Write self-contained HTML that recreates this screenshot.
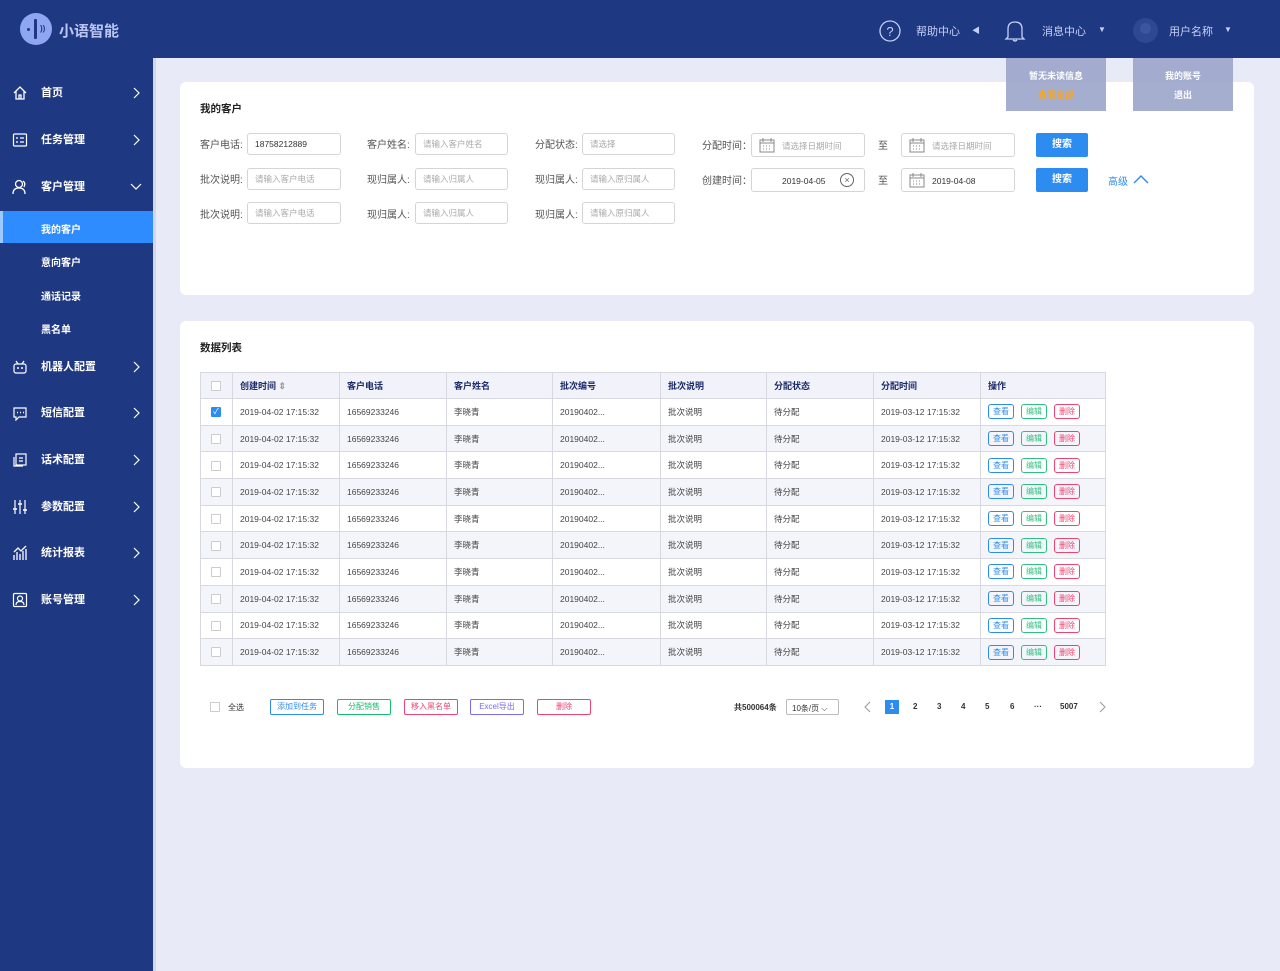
<!DOCTYPE html>
<html><head><meta charset="utf-8"><style>
*{margin:0;padding:0;box-sizing:border-box}
body{width:1280px;height:971px;background:#e8eaf7;font-family:"Liberation Sans","Noto Sans CJK SC",sans-serif;position:relative;overflow:hidden;color:#333}
.abs{position:absolute}
#hd{left:0;top:0;width:1280px;height:58px;background:#1f3882}
#sb{left:0;top:58px;width:153px;height:913px;background:#1f3882}
.nav{position:absolute;left:0;width:153px;height:20px;color:#fff;font-size:11px;font-weight:bold}
.nav .t{position:absolute;left:41px;top:0px}
.nav .ic{position:absolute;left:12px;top:1px}
.nav .ar{position:absolute;left:133px;top:3px}
.sub{position:absolute;left:41px;color:#fff;font-size:10px;font-weight:bold}
.card{position:absolute;background:#fff;border-radius:6px}
.lbl{position:absolute;font-size:10px;color:#555;margin-top:-2px}
.inp{position:absolute;height:22px;border:1px solid #d5d5d5;border-radius:3px;font-size:8.5px;color:#aaa;padding:6px 7px;background:#fff;line-height:9px}
.btn{position:absolute;width:52px;height:24px;background:#2d8cf0;border-radius:2px;color:#fff;font-size:10px;font-weight:bold;text-align:center;line-height:24px}
table{position:absolute;left:200px;top:372px;border-collapse:collapse;font-size:8.5px;color:#444}
td,th{border:1px solid #d8d8e0;height:26.7px;padding-left:7px;text-align:left;white-space:nowrap}
th{background:#f1f2fa;color:#1b2a6b;font-weight:bold;font-size:9px;height:26px}
tr:nth-child(odd) td{background:#f4f5fb}
.cb{display:inline-block;width:10px;height:10px;border:1px solid #ccc;border-radius:1px;background:#fff;vertical-align:middle}
.op{display:inline-block;width:26px;height:15px;border:1px solid;border-radius:3px;text-align:center;line-height:13px;font-size:8px;margin-right:7px}
.b{color:#2d8cf0}.g{color:#2fbf7f}.r{color:#f0436f}
.fb{position:absolute;top:699px;height:16px;border:1px solid;border-radius:2px;font-size:8px;text-align:center;line-height:14px}
.pg{position:absolute;top:702px;font-size:8px;color:#333;font-weight:bold}
.dd{position:absolute;background:rgba(150,160,200,0.85);color:#fff;font-size:9px;font-weight:bold;text-align:center}
</style></head><body>
<div id="hd" class="abs">
<div class="abs" style="left:20px;top:13px;width:32px;height:32px;border-radius:50%;background:#8fa6f2"></div>
<div class="abs" style="left:34px;top:19px;width:3px;height:20px;background:#1f3882;border-radius:1px"></div>
<div class="abs" style="left:27px;top:28px;width:3px;height:3px;background:#1f3882;border-radius:50%"></div>
<div class="abs" style="left:40px;top:24px;font-size:8px;color:#1f3882;font-weight:bold">))</div>
<div class="abs" style="left:59px;top:20px;color:#b9c6f3;font-size:15px;font-weight:bold">小语智能</div>
<svg class="abs" style="left:879px;top:20px" width="22" height="22"><circle cx="11" cy="11" r="10" fill="none" stroke="#c5d0f5" stroke-width="1.3"/><text x="11" y="16" font-size="13" fill="#c5d0f5" text-anchor="middle" font-family="Liberation Sans">?</text></svg>
<div class="abs" style="left:916px;top:23px;color:#c5d0f5;font-size:11px">帮助中心</div>
<div class="abs" style="left:972px;top:25px;color:#c5d0f5;font-size:8px">◀</div>
<svg class="abs" style="left:1004px;top:19px" width="22" height="24"><path d="M4 18 L4 10 Q4 3 11 3 Q18 3 18 10 L18 18 L20 20 L2 20 Z M9 21 Q11 23 13 21" fill="none" stroke="#c5d0f5" stroke-width="1.3"/></svg>
<div class="abs" style="left:1042px;top:23px;color:#c5d0f5;font-size:11px">消息中心</div>
<div class="abs" style="left:1098px;top:25px;color:#c5d0f5;font-size:8px">▼</div>
<div class="abs" style="left:1133px;top:18px;width:25px;height:25px;border-radius:50%;background:#2e4892"></div>
<div class="abs" style="left:1140px;top:23px;width:11px;height:11px;border-radius:50%;background:#3d559c"></div>
<div class="abs" style="left:1169px;top:23px;color:#c5d0f5;font-size:11px">用户名称</div>
<div class="abs" style="left:1224px;top:25px;color:#c5d0f5;font-size:8px">▼</div>
</div>
<div id="sb" class="abs"></div>
<div class="abs" style="left:153px;top:58px;width:3px;height:913px;background:#d4d7ea"></div>
<div class="nav" style="top:84px"><svg class="ic" width="16" height="16"><path d="M2 8 L8 2 L14 8 M4 6 V14 H12 V6 M7 14 V10 H9 V14" fill="none" stroke="#fff" stroke-width="1.3"/></svg><span class="t">首页</span><svg class="ar" width="8" height="12"><path d="M1 1L6 6L1 11" fill="none" stroke="#fff" stroke-width="1.2"/></svg></div>
<div class="nav" style="top:131px"><svg class="ic" width="16" height="16"><rect x="1.5" y="2" width="13" height="12" rx="1" fill="none" stroke="#fff" stroke-width="1.2"/><path d="M4 6h2M8 6h4M4 10h2M8 10h4" stroke="#fff" stroke-width="1.2"/></svg><span class="t">任务管理</span><svg class="ar" width="8" height="12"><path d="M1 1L6 6L1 11" fill="none" stroke="#fff" stroke-width="1.2"/></svg></div>
<div class="nav" style="top:178px"><svg class="ic" width="16" height="16"><circle cx="7" cy="5" r="3.5" fill="none" stroke="#fff" stroke-width="1.3"/><path d="M1 15 Q1 9 7 9 Q13 9 13 15 M11 2 Q14 4 12 8" fill="none" stroke="#fff" stroke-width="1.3"/></svg><span class="t">客户管理</span><svg class="ar" style="left:130px;top:5px" width="12" height="8"><path d="M1 1L6 6L11 1" fill="none" stroke="#fff" stroke-width="1.2"/></svg></div>
<div class="abs" style="left:0;top:211px;width:153px;height:32px;background:#2f8cff"></div>
<div class="abs" style="left:0;top:211px;width:3px;height:32px;background:#9cc9ff"></div>
<div class="sub" style="top:221px">我的客户</div>
<div class="sub" style="top:254px">意向客户</div>
<div class="sub" style="top:288px">通话记录</div>
<div class="sub" style="top:321px">黑名单</div>
<div class="nav" style="top:358px"><svg class="ic" width="16" height="16"><rect x="2" y="5" width="12" height="9" rx="2" fill="none" stroke="#fff" stroke-width="1.2"/><path d="M4 2 L6 5 M12 2 L10 5" stroke="#fff" stroke-width="1.2"/><circle cx="6" cy="9" r="1" fill="#fff"/><circle cx="10" cy="9" r="1" fill="#fff"/></svg><span class="t">机器人配置</span><svg class="ar" width="8" height="12"><path d="M1 1L6 6L1 11" fill="none" stroke="#fff" stroke-width="1.2"/></svg></div>
<div class="nav" style="top:404px"><svg class="ic" width="16" height="16"><path d="M2 3h12v9H7l-3 3v-3H2z" fill="none" stroke="#fff" stroke-width="1.2"/><path d="M5 7.5h1M8 7.5h1M11 7.5h1" stroke="#fff" stroke-width="1.4"/></svg><span class="t">短信配置</span><svg class="ar" width="8" height="12"><path d="M1 1L6 6L1 11" fill="none" stroke="#fff" stroke-width="1.2"/></svg></div>
<div class="nav" style="top:451px"><svg class="ic" width="16" height="16"><rect x="4" y="2" width="10" height="11" fill="none" stroke="#fff" stroke-width="1.2"/><path d="M2 5v9h9M7 6h4M7 9h4" fill="none" stroke="#fff" stroke-width="1.2"/></svg><span class="t">话术配置</span><svg class="ar" width="8" height="12"><path d="M1 1L6 6L1 11" fill="none" stroke="#fff" stroke-width="1.2"/></svg></div>
<div class="nav" style="top:498px"><svg class="ic" width="16" height="16"><path d="M3 1v14M8 1v14M13 1v14" stroke="#fff" stroke-width="1.2"/><path d="M1 10h4M6 5h4M11 11h4" stroke="#fff" stroke-width="1.6"/></svg><span class="t">参数配置</span><svg class="ar" width="8" height="12"><path d="M1 1L6 6L1 11" fill="none" stroke="#fff" stroke-width="1.2"/></svg></div>
<div class="nav" style="top:544px"><svg class="ic" width="16" height="16"><path d="M2 15V10M5 15V7M8 15V9M11 15V6M14 15V4M2 7L6 3L9 6L14 1" fill="none" stroke="#fff" stroke-width="1.3"/></svg><span class="t">统计报表</span><svg class="ar" width="8" height="12"><path d="M1 1L6 6L1 11" fill="none" stroke="#fff" stroke-width="1.2"/></svg></div>
<div class="nav" style="top:591px"><svg class="ic" width="16" height="16"><rect x="1.5" y="1.5" width="13" height="13" rx="1" fill="none" stroke="#fff" stroke-width="1.2"/><circle cx="8" cy="6.5" r="2.5" fill="none" stroke="#fff" stroke-width="1.2"/><path d="M4 13Q4 9.5 8 9.5Q12 9.5 12 13" fill="none" stroke="#fff" stroke-width="1.2"/></svg><span class="t">账号管理</span><svg class="ar" width="8" height="12"><path d="M1 1L6 6L1 11" fill="none" stroke="#fff" stroke-width="1.2"/></svg></div>

<div class="card" style="left:180px;top:82px;width:1074px;height:213px"></div>
<div class="abs" style="left:200px;top:101px;font-size:10.5px;font-weight:bold;color:#222">我的客户</div>
<div class="lbl" style="left:200px;top:138px">客户电话:</div><div class="inp" style="left:247px;top:133px;width:94px;color:#333">18758212889</div>
<div class="lbl" style="left:367px;top:138px">客户姓名:</div><div class="inp" style="left:415px;top:133px;width:93px">请输入客户姓名</div>
<div class="lbl" style="left:535px;top:138px">分配状态:</div><div class="inp" style="left:582px;top:133px;width:93px">请选择</div>
<div class="lbl" style="left:702px;top:139px">分配时间：</div><div class="inp" style="left:751px;top:133px;width:114px;height:24px;padding-left:30px;padding-top:8px">请选择日期时间</div>
<div class="lbl" style="left:878px;top:139px">至</div><div class="inp" style="left:901px;top:133px;width:114px;height:24px;padding-left:30px;padding-top:8px">请选择日期时间</div>
<div class="btn" style="left:1036px;top:133px">搜索</div>
<div class="lbl" style="left:200px;top:173px">批次说明:</div><div class="inp" style="left:247px;top:168px;width:94px">请输入客户电话</div>
<div class="lbl" style="left:367px;top:173px">现归属人:</div><div class="inp" style="left:415px;top:168px;width:93px">请输入归属人</div>
<div class="lbl" style="left:535px;top:173px">现归属人:</div><div class="inp" style="left:582px;top:168px;width:93px">请输入原归属人</div>
<div class="lbl" style="left:702px;top:174px">创建时间：</div><div class="inp" style="left:751px;top:168px;width:114px;height:24px;padding-left:30px;padding-top:8px;color:#333">2019-04-05</div>
<div class="abs" style="left:840px;top:173px;width:14px;height:14px;border:1px solid #666;border-radius:50%;font-size:9px;text-align:center;line-height:12px;color:#666">×</div>
<div class="lbl" style="left:878px;top:174px">至</div><div class="inp" style="left:901px;top:168px;width:114px;height:24px;padding-left:30px;padding-top:8px;color:#333">2019-04-08</div>
<div class="btn" style="left:1036px;top:168px">搜索</div>
<div class="abs" style="left:1108px;top:173px;color:#2d8cf0;font-size:10px">高级</div>
<svg class="abs" style="left:1133px;top:174px" width="16" height="10"><path d="M1 9L8 2L15 9" fill="none" stroke="#2d8cf0" stroke-width="1.4"/></svg>
<div class="lbl" style="left:200px;top:208px">批次说明:</div><div class="inp" style="left:247px;top:202px;width:94px">请输入客户电话</div>
<div class="lbl" style="left:367px;top:208px">现归属人:</div><div class="inp" style="left:415px;top:202px;width:93px">请输入归属人</div>
<div class="lbl" style="left:535px;top:208px">现归属人:</div><div class="inp" style="left:582px;top:202px;width:93px">请输入原归属人</div>
<svg class="abs" style="left:759px;top:137px" width="16" height="16"><rect x="1" y="3" width="14" height="12" fill="none" stroke="#888"/><path d="M1 6h14M4 1v4M12 1v4M4 9h1M7 9h1M10 9h1M4 12h1M7 12h1M10 12h1" stroke="#888"/></svg>
<svg class="abs" style="left:909px;top:137px" width="16" height="16"><rect x="1" y="3" width="14" height="12" fill="none" stroke="#888"/><path d="M1 6h14M4 1v4M12 1v4M4 9h1M7 9h1M10 9h1M4 12h1M7 12h1M10 12h1" stroke="#888"/></svg>
<svg class="abs" style="left:909px;top:172px" width="16" height="16"><rect x="1" y="3" width="14" height="12" fill="none" stroke="#888"/><path d="M1 6h14M4 1v4M12 1v4M4 9h1M7 9h1M10 9h1M4 12h1M7 12h1M10 12h1" stroke="#888"/></svg>

<div class="dd" style="left:1006px;top:58px;width:100px;height:53px"><div style="margin-top:11px">暂无未读信息</div><div style="margin-top:6px;color:#f5a623;text-decoration:underline">查看全部</div></div>
<div class="dd" style="left:1133px;top:58px;width:100px;height:53px"><div style="margin-top:11px">我的账号</div><div style="margin-top:6px">退出</div></div>

<div class="card" style="left:180px;top:321px;width:1074px;height:447px"></div>
<div class="abs" style="left:200px;top:340px;font-size:10.5px;font-weight:bold;color:#222">数据列表</div>
<table>
<tr><th style="width:32px;padding-left:10px"><span class="cb"></span></th><th style="width:107px">创建时间 <span style="color:#999">⇕</span></th><th style="width:107px">客户电话</th><th style="width:106px">客户姓名</th><th style="width:108px">批次编号</th><th style="width:106px">批次说明</th><th style="width:107px">分配状态</th><th style="width:107px">分配时间</th><th style="width:125px">操作</th></tr>
<tr><td style="padding-left:10px"><span class="cb" style="background:#2d8cf0;border-color:#2d8cf0;color:#fff;font-size:8px;line-height:8px;text-align:center">✓</span></td><td>2019-04-02 17:15:32</td><td>16569233246</td><td>李晓青</td><td>20190402...</td><td>批次说明</td><td>待分配</td><td>2019-03-12 17:15:32</td><td><span class="op b">查看</span><span class="op g">编辑</span><span class="op r">删除</span></td></tr>
<tr><td style="padding-left:10px"><span class="cb"></span></td><td>2019-04-02 17:15:32</td><td>16569233246</td><td>李晓青</td><td>20190402...</td><td>批次说明</td><td>待分配</td><td>2019-03-12 17:15:32</td><td><span class="op b">查看</span><span class="op g">编辑</span><span class="op r">删除</span></td></tr>
<tr><td style="padding-left:10px"><span class="cb"></span></td><td>2019-04-02 17:15:32</td><td>16569233246</td><td>李晓青</td><td>20190402...</td><td>批次说明</td><td>待分配</td><td>2019-03-12 17:15:32</td><td><span class="op b">查看</span><span class="op g">编辑</span><span class="op r">删除</span></td></tr>
<tr><td style="padding-left:10px"><span class="cb"></span></td><td>2019-04-02 17:15:32</td><td>16569233246</td><td>李晓青</td><td>20190402...</td><td>批次说明</td><td>待分配</td><td>2019-03-12 17:15:32</td><td><span class="op b">查看</span><span class="op g">编辑</span><span class="op r">删除</span></td></tr>
<tr><td style="padding-left:10px"><span class="cb"></span></td><td>2019-04-02 17:15:32</td><td>16569233246</td><td>李晓青</td><td>20190402...</td><td>批次说明</td><td>待分配</td><td>2019-03-12 17:15:32</td><td><span class="op b">查看</span><span class="op g">编辑</span><span class="op r">删除</span></td></tr>
<tr><td style="padding-left:10px"><span class="cb"></span></td><td>2019-04-02 17:15:32</td><td>16569233246</td><td>李晓青</td><td>20190402...</td><td>批次说明</td><td>待分配</td><td>2019-03-12 17:15:32</td><td><span class="op b">查看</span><span class="op g">编辑</span><span class="op r">删除</span></td></tr>
<tr><td style="padding-left:10px"><span class="cb"></span></td><td>2019-04-02 17:15:32</td><td>16569233246</td><td>李晓青</td><td>20190402...</td><td>批次说明</td><td>待分配</td><td>2019-03-12 17:15:32</td><td><span class="op b">查看</span><span class="op g">编辑</span><span class="op r">删除</span></td></tr>
<tr><td style="padding-left:10px"><span class="cb"></span></td><td>2019-04-02 17:15:32</td><td>16569233246</td><td>李晓青</td><td>20190402...</td><td>批次说明</td><td>待分配</td><td>2019-03-12 17:15:32</td><td><span class="op b">查看</span><span class="op g">编辑</span><span class="op r">删除</span></td></tr>
<tr><td style="padding-left:10px"><span class="cb"></span></td><td>2019-04-02 17:15:32</td><td>16569233246</td><td>李晓青</td><td>20190402...</td><td>批次说明</td><td>待分配</td><td>2019-03-12 17:15:32</td><td><span class="op b">查看</span><span class="op g">编辑</span><span class="op r">删除</span></td></tr>
<tr><td style="padding-left:10px"><span class="cb"></span></td><td>2019-04-02 17:15:32</td><td>16569233246</td><td>李晓青</td><td>20190402...</td><td>批次说明</td><td>待分配</td><td>2019-03-12 17:15:32</td><td><span class="op b">查看</span><span class="op g">编辑</span><span class="op r">删除</span></td></tr>
</table>

<span class="cb abs" style="left:210px;top:702px"></span>
<div class="abs" style="left:228px;top:702px;font-size:8px">全选</div>
<div class="fb" style="left:270px;width:54px;color:#2d8cf0">添加到任务</div>
<div class="fb" style="left:337px;width:54px;color:#19be6b">分配销售</div>
<div class="fb" style="left:404px;width:54px;color:#f0436f">移入黑名单</div>
<div class="fb" style="left:470px;width:54px;color:#7a6cf0">Excel导出</div>
<div class="fb" style="left:537px;width:54px;color:#f0436f">删除</div>
<div class="pg" style="left:734px">共500064条</div>
<div class="abs" style="left:786px;top:699px;width:53px;height:16px;border:1px solid #bbb;border-radius:2px;font-size:8px;padding:3px 5px">10条/页 ⌵</div>
<svg class="abs" style="left:864px;top:701px" width="8" height="12"><path d="M6 1L1 6L6 11" fill="none" stroke="#999"/></svg>
<div class="abs" style="left:885px;top:700px;width:14px;height:14px;background:#2d8cf0;color:#fff;font-size:8px;font-weight:bold;text-align:center;line-height:14px">1</div>
<div class="pg" style="left:913px">2</div><div class="pg" style="left:937px">3</div><div class="pg" style="left:961px">4</div><div class="pg" style="left:985px">5</div><div class="pg" style="left:1010px">6</div><div class="pg" style="left:1034px">···</div><div class="pg" style="left:1060px">5007</div>
<svg class="abs" style="left:1099px;top:701px" width="8" height="12"><path d="M1 1L6 6L1 11" fill="none" stroke="#999"/></svg>
</body></html>
